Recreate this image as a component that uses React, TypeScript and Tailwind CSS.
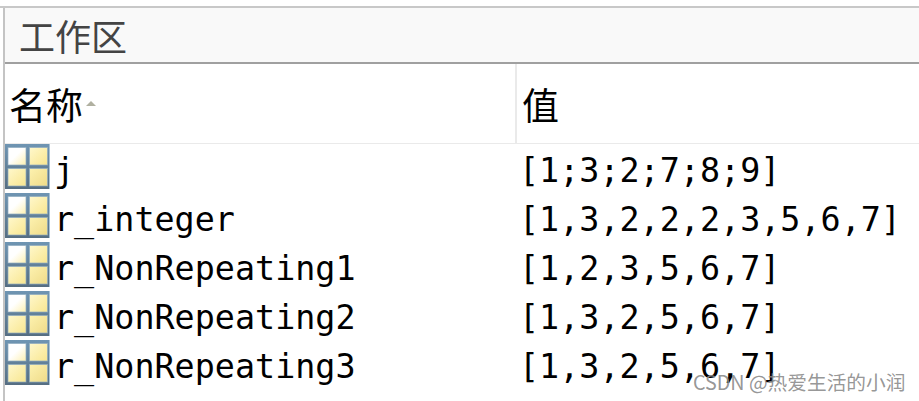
const rows = [
  ["j", "[1;3;2;7;8;9]"],
  ["r_integer", "[1,3,2,2,2,3,5,6,7]"],
  ["r_NonRepeating1", "[1,2,3,5,6,7]"],
  ["r_NonRepeating2", "[1,3,2,5,6,7]"],
  ["r_NonRepeating3", "[1,3,2,5,6,7]"],
];

function GridIcon() {
  const edge = { stroke: "#8fabc0", strokeWidth: 1, strokeOpacity: 0.7 };
  return (
    <svg width="46" height="46" viewBox="0 0 46 46" className="shrink-0 block">
      <defs>
        <linearGradient id="cellA" x1="0" y1="0" x2="1" y2="1">
          <stop offset="0" stopColor="#ffffff" />
          <stop offset="0.45" stopColor="#ffffff" />
          <stop offset="1" stopColor="#fdf0b0" />
        </linearGradient>
        <linearGradient id="cellB" x1="0" y1="0" x2="1" y2="1">
          <stop offset="0" stopColor="#fff8cc" />
          <stop offset="1" stopColor="#f8e690" />
        </linearGradient>
        <linearGradient id="cellC" x1="0" y1="0" x2="1" y2="1">
          <stop offset="0" stopColor="#fdf2b0" />
          <stop offset="1" stopColor="#efdb88" />
        </linearGradient>
        <linearGradient id="frame" x1="0" y1="0" x2="0" y2="1">
          <stop offset="0" stopColor="#6f95b3" />
          <stop offset="1" stopColor="#566e82" />
        </linearGradient>
      </defs>
      <rect x="0" y="0" width="45" height="45" fill="url(#frame)" />
      <rect x="44" y="0" width="1" height="45" fill="#a9c2d6" />
      <rect x="3" y="3.5" width="18" height="17.5" fill="url(#cellA)" {...edge} />
      <rect x="24.5" y="3.5" width="18" height="17.5" fill="url(#cellB)" {...edge} />
      <rect x="3" y="24.5" width="18" height="17.5" fill="url(#cellB)" {...edge} />
      <rect x="24.5" y="24.5" width="18" height="17.5" fill="url(#cellC)" {...edge} />
    </svg>
  );
}

const cjk = "font-['Noto_Sans_CJK_SC','Noto_Sans_CJK_JP',sans-serif]";

export default function App() {
  return (
    <div className="relative w-[919px] h-[401px] overflow-hidden bg-white">
      <div className="h-[6px] bg-white" />
      <div className="h-[2px] bg-[#c8c8c8]" />
      <div className="ml-[3px] h-[393px] border-l-2 border-[#c4c4c4] bg-white flex flex-col">
        <div className={`h-[56px] bg-[#f9f9f9] border-b-2 border-[#a0a0a0] pl-[14px] flex items-center text-[36px] leading-none text-[#444444] ${cjk}`}>
          工作区
        </div>
        <div className="h-[80px] flex border-b border-[#eaeaea] text-black">
          <div className="w-[512px] flex items-center pl-[4px] pt-[2px] border-r-2 border-[#eaeaea]">
            <span className={`text-[37px] leading-none ${cjk}`}>名称</span>
            <svg width="10" height="6" viewBox="0 0 10 6" className="ml-[3px] mb-[3px]">
              <path d="M0 6 L5 1 L10 6 Z" fill="#b0b0a0" />
            </svg>
          </div>
          <div className={`flex items-center pl-[5px] pt-[2px] text-[37px] leading-none ${cjk}`}>值</div>
        </div>
        <div className="flex flex-col gap-[3px]">
          {rows.map(([name, value]) => (
            <div key={name} className="h-[46px] flex items-center text-[33.4px] leading-none text-black font-['DejaVu_Sans_Mono',monospace]">
              <GridIcon />
              <div className="w-[463px] pl-[3px] pt-[8px] whitespace-pre">{name}</div>
              <div className="pl-[5px] pt-[8px] whitespace-pre">{value}</div>
            </div>
          ))}
        </div>
      </div>
      <div className={`absolute left-[693px] top-[369px] text-[19.7px] leading-[26px] text-[#8a8a8a]/90 ${cjk}`}>
        CSDN @热爱生活的小润
      </div>
    </div>
  );
}
